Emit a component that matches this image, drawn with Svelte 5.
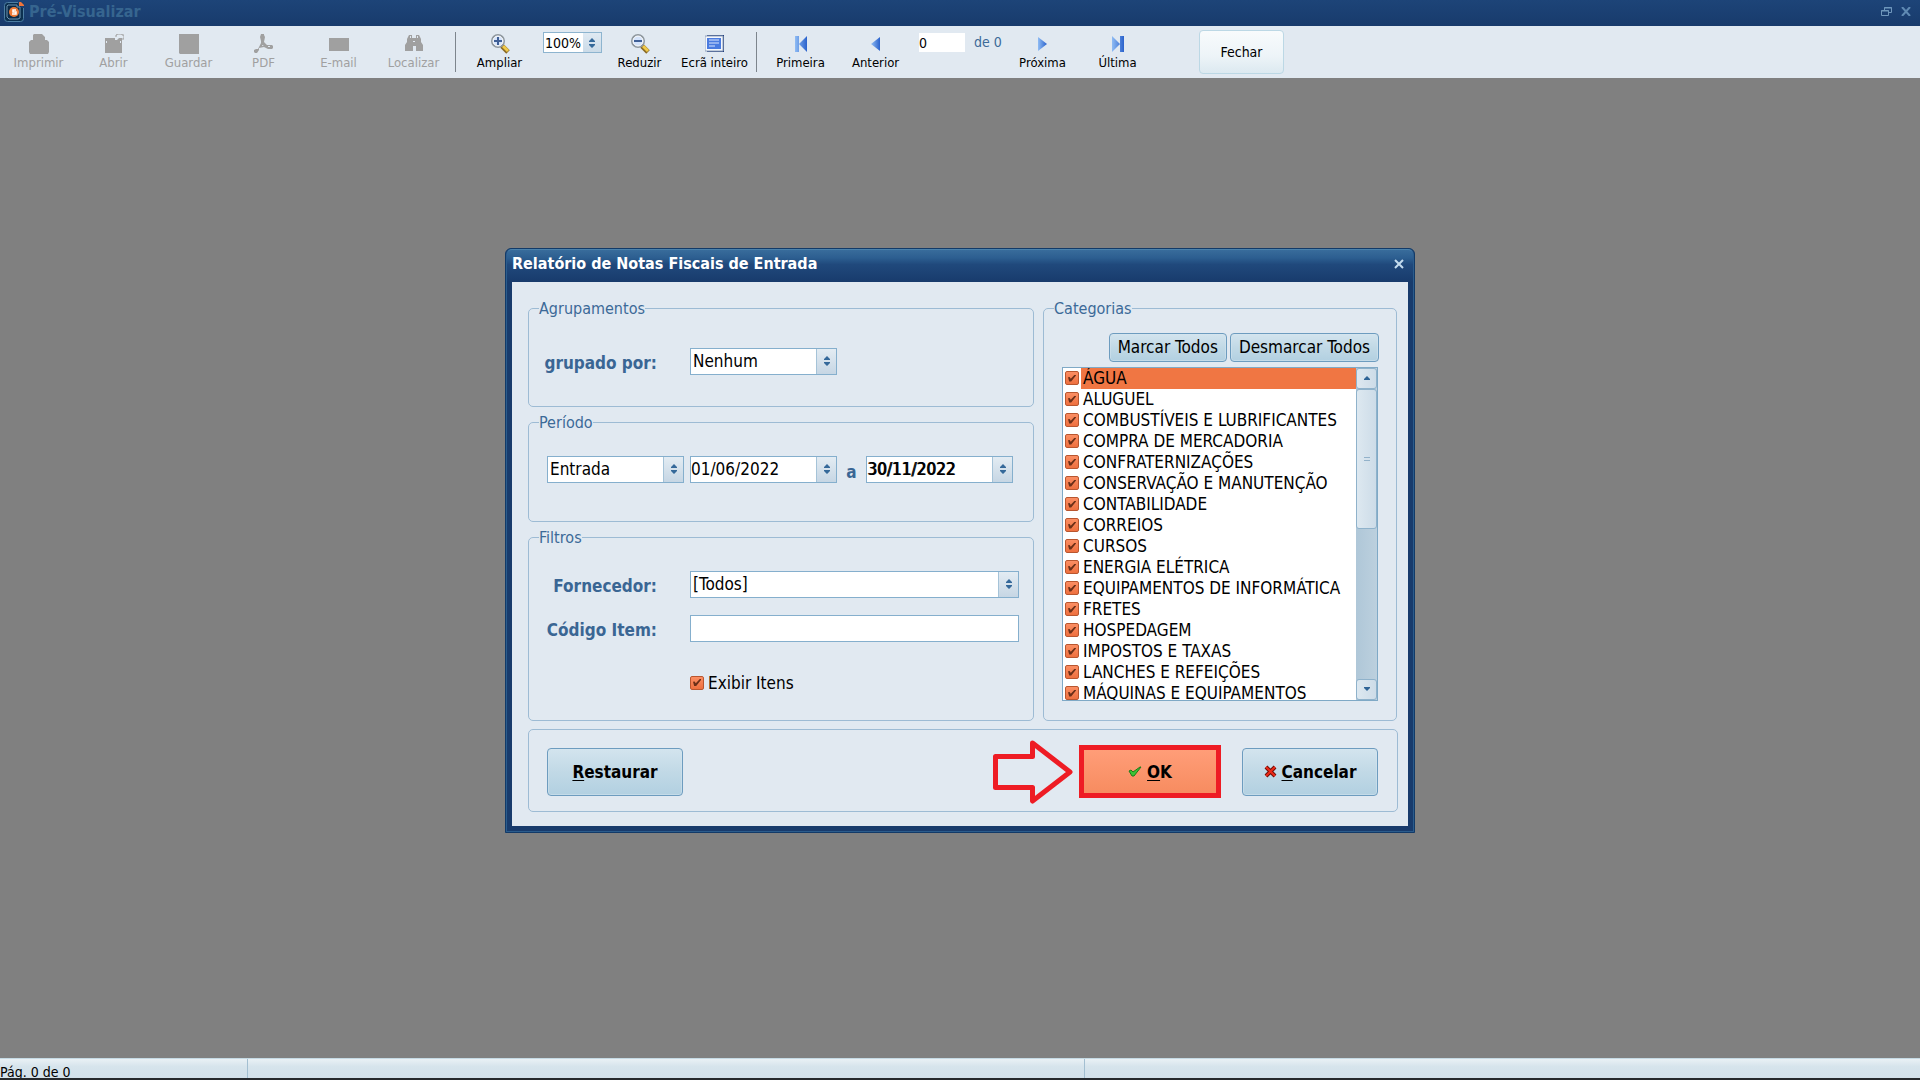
<script>
  let groupBy = $state('Nenhum');
  let dateKind = $state('Entrada');
  let dateFrom = $state('01/06/2022');
  let dateTo = $state('30/11/2022');
  let supplier = $state('[Todos]');
  let itemCode = $state('');
  let showItems = $state(true);
  let selected = $state(0);
  let zoom = $state('100%');
  let page = $state('0');

  const names = [
    'ÁGUA',
    'ALUGUEL',
    'COMBUSTÍVEIS E LUBRIFICANTES',
    'COMPRA DE MERCADORIA',
    'CONFRATERNIZAÇÕES',
    'CONSERVAÇÃO E MANUTENÇÃO',
    'CONTABILIDADE',
    'CORREIOS',
    'CURSOS',
    'ENERGIA ELÉTRICA',
    'EQUIPAMENTOS DE INFORMÁTICA',
    'FRETES',
    'HOSPEDAGEM',
    'IMPOSTOS E TAXAS',
    'LANCHES E REFEIÇÕES',
    'MÁQUINAS E EQUIPAMENTOS'
  ];

  let categories = $state(names.map((name) => ({ name, checked: true })));

  function markAll(value) {
    for (const c of categories) c.checked = value;
  }

  const fileTools = ['Imprimir', 'Abrir', 'Guardar', 'PDF', 'E-mail', 'Localizar'];
</script>

{#snippet arrows()}
  <svg width="6" height="10" viewBox="0 0 6 10" fill="#35699a">
    <path d="M3 0 6 3V4H0V3zM3 10 6 7V6H0V7z" />
  </svg>
{/snippet}

{#snippet fileIcon(name)}
  <svg width="20" height="20" viewBox="0 0 20 20" fill="#a0a0a0">
    {#if name === 'Imprimir'}
      <path d="M5 0h8l3 3v3h2l2 2v10l-1 2H1l-1-2V8l2-2h2V1z" />
    {:else if name === 'Abrir'}
      <path d="M1 4h10v2h2l2-2h3v15H1z" />
      <path d="M12 3V1h1V0h5v1h3M20 1v4h-4" fill="none" stroke="#a0a0a0" />
      <path d="M2 7h1v2H2zM16 7h1v2h-1z" fill="#e1e9f1" />
    {:else if name === 'Guardar'}
      <path d="M0 0h20v20H1l-1-1z" />
    {:else if name === 'PDF'}
      <path d="M7 0h3v1l1 2-1 5 3 3h5l1 1v2l-1 1h-4l-4-2-5 1v2l-2 3H1l-1-1v-2l2-1h2l3-6V7L6 3z" />
      <path d="M8 11h2l-2 1zM14 12h2v1h-2z" fill="#e1e9f1" />
    {:else if name === 'E-mail'}
      <path d="M0 4h20v13H0z" />
    {:else}
      <path d="M5 1h3v3h4V1h3l2 4v3l2 3v6h-7v-5H9v5H1v-6l2-3V5z" />
      <path d="M6 2h1v2H6zM13 2h1v2h-1zM9 7h2v1H9z" fill="#e1e9f1" />
    {/if}
  </svg>
{/snippet}

{#snippet lens(plus)}
  <svg width="20" height="20" viewBox="0 0 20 20">
    <path d="M12 12l6 6" stroke="#8a6a24" stroke-width="5" />
    <path d="M13 12l5 5" stroke="#f0c94a" stroke-width="3" />
    <circle cx="8" cy="7" r="6" fill="#d4e3fa" stroke="#8f989f" stroke-width="2" />
    <circle cx="8" cy="7" r="5" fill="none" stroke="#fff" stroke-width="1" />
    <path d={plus ? 'M4 7h8M8 3v8' : 'M4 7h8'} stroke="#3f5f96" stroke-width="2" />
  </svg>
{/snippet}

{#snippet navIcon(kind)}
  <svg width="12" height="16" viewBox="0 0 12 16">
    <defs>
      <linearGradient id="nav-{kind}" x1="0" x2="1">
        <stop offset="0" stop-color="#8fbcf4" />
        <stop offset="1" stop-color="#2a62cc" />
      </linearGradient>
    </defs>
    <g fill="url(#nav-{kind})">
      {#if kind === 'first'}
        <path d="M0 0h4v16H0zM12 0v16L4 8z" />
      {:else if kind === 'prev'}
        <path d="M10 1v14L1 8z" />
      {:else if kind === 'next'}
        <path d="M1 1v14l9-7z" />
      {:else}
        <path d="M0 0v16l8-8zM8 0h4v16H8z" />
      {/if}
    </g>
  </svg>
{/snippet}

<div class="app">
  <header class="titlebar">
    <svg width="20" height="20" viewBox="0 0 20 20">
      <rect x="0.5" y="0.5" width="19" height="19" rx="3" fill="#0c3050" stroke="#4d7ea3" />
      <path d="M4 3h9v2h3v11l-2 1H5l-2-2V4z" fill="#0b2a48" stroke="#6d93b0" />
      <path d="M14 0h6v6h-2l-4-4z" fill="#1c4070" />
      <path d="M15 0h2l3 3v1h-5z" fill="#f0743a" />
      <circle cx="10" cy="10" r="5" fill="#f07a35" />
      <path d="M12 8H9v2h3v2H8" fill="none" stroke="#fff" stroke-width="1.5" />
    </svg>
    <h1>Pré-Visualizar</h1>
    <button class="win" aria-label="Restaurar janela">
      <svg width="11" height="9" viewBox="0 0 11 9" fill="none" stroke="#6f97bc">
        <path d="M3.500 3V.5h7v5H8" />
        <path d="M3 1h8" />
        <path d="M.5 3.500h7v5h-7z" />
        <path d="M0 4h8" />
      </svg>
    </button>
    <button class="win" aria-label="Fechar janela">
      <svg width="10" height="9" viewBox="0 0 10 9" stroke="#5f8ab3" stroke-width="2">
        <path d="M1 0l8 9M9 0L1 9" />
      </svg>
    </button>
  </header>

  <div class="toolbar">
    {#each fileTools as name}
      <button class="tool" disabled>{@render fileIcon(name)}<span>{name}</span></button>
    {/each}
    <i class="sep"></i>
    <button class="tool">{@render lens(true)}<span>Ampliar</span></button>
    <div class="zoom">
      <input aria-label="Zoom" bind:value={zoom} />
      <button aria-label="Alterar zoom">{@render arrows()}</button>
    </div>
    <button class="tool">{@render lens(false)}<span>Reduzir</span></button>
    <button class="tool">
      <svg width="20" height="20" viewBox="0 0 20 20">
        <path d="M2 1h17v17H2z" fill="#24407c" />
        <path d="M0 2h18v15H0z" fill="#f4f7fc" stroke="#8fa0bb" />
        <path d="M2 4h14v11H2z" fill="#4a7be0" />
        <path d="M4 6h10M4 9h10M4 12h6" stroke="#d9e6ff" />
      </svg>
      <span>Ecrã inteiro</span>
    </button>
    <i class="sep"></i>
    <button class="tool">{@render navIcon('first')}<span>Primeira</span></button>
    <button class="tool">{@render navIcon('prev')}<span>Anterior</span></button>
    <label class="page"><input aria-label="Página" bind:value={page} />de 0</label>
    <button class="tool">{@render navIcon('next')}<span>Próxima</span></button>
    <button class="tool">{@render navIcon('last')}<span>Última</span></button>
    <button class="close">Fechar</button>
  </div>

  <main></main>

  <footer class="status">
    <span class="first">Pág. 0 de 0</span>
    <span class="second"></span>
    <span class="third"></span>
  </footer>

  <div class="overlay">
    <div class="dialog" role="dialog" aria-labelledby="dialog-title">
      <div class="caption">
        <h2 id="dialog-title">Relatório de Notas Fiscais de Entrada</h2>
        <button class="win" aria-label="Fechar">
          <svg width="10" height="10" viewBox="0 0 10 10" stroke="#c3dbee" stroke-width="2">
            <path d="M1 1l8 8M9 1L1 9" />
          </svg>
        </button>
      </div>

      <div class="content">
        <div class="columns">
          <div class="left">
            <fieldset class="grouping">
              <legend>Agrupamentos</legend>
              <div class="row">
                <label class="name" for="group">grupado por:</label>
                <div class="field">
                  <select id="group" bind:value={groupBy}><option>Nenhum</option></select>
                  <span class="spin">{@render arrows()}</span>
                </div>
              </div>
            </fieldset>

            <fieldset class="period">
              <legend>Período</legend>
              <div class="row dates">
                <div class="field kind">
                  <select aria-label="Tipo de data" bind:value={dateKind}><option>Entrada</option></select>
                  <span class="spin">{@render arrows()}</span>
                </div>
                <div class="field date">
                  <input aria-label="Data inicial" bind:value={dateFrom} />
                  <span class="spin">{@render arrows()}</span>
                </div>
                <span class="to">a</span>
                <div class="field date strong">
                  <input aria-label="Data final" bind:value={dateTo} />
                  <span class="spin">{@render arrows()}</span>
                </div>
              </div>
            </fieldset>

            <fieldset class="filters">
              <legend>Filtros</legend>
              <div class="row">
                <label class="name" for="supplier">Fornecedor:</label>
                <div class="field wide">
                  <select id="supplier" bind:value={supplier}><option>[Todos]</option></select>
                  <span class="spin">{@render arrows()}</span>
                </div>
              </div>
              <div class="row">
                <label class="name" for="code">Código Item:</label>
                <div class="field wide"><input id="code" bind:value={itemCode} /></div>
              </div>
              <label class="show">
                <input type="checkbox" bind:checked={showItems} />Exibir Itens
              </label>
            </fieldset>
          </div>

          <fieldset class="categories">
            <legend>Categorias</legend>
            <div class="marks">
              <button class="btn" onclick={() => markAll(true)}>Marcar Todos</button>
              <button class="btn" onclick={() => markAll(false)}>Desmarcar Todos</button>
            </div>
            <div class="listbox">
              <ul>
                {#each categories as c, i}
                  <li>
                    <input type="checkbox" id="cat-{i}" bind:checked={c.checked} onfocus={() => (selected = i)} />
                    <label for="cat-{i}" class:selected={i === selected}>{c.name}</label>
                  </li>
                {/each}
              </ul>
              <div class="scroll">
                <button aria-label="Subir">
                  <svg width="6" height="4" viewBox="0 0 6 4" fill="#2f6496"><path d="M3 0 6 3v1H0V3z" /></svg>
                </button>
                <div class="thumb"><i></i></div>
                <button aria-label="Descer">
                  <svg width="6" height="4" viewBox="0 0 6 4" fill="#2f6496"><path d="M3 4 6 1V0H0v1z" /></svg>
                </button>
              </div>
            </div>
          </fieldset>
        </div>

        <div class="actions">
          <button class="btn big"><span><u>R</u>estaurar</span></button>
          <svg class="pointer" width="80" height="66" viewBox="0 0 80 66">
            <path
              d="M2.500 17.500h37V4L77 33 39.500 62V48.500h-37z"
              fill="none"
              stroke="#ee1c24"
              stroke-width="5"
              stroke-linejoin="round"
            />
          </svg>
          <button class="ok">
            <svg width="14" height="11" viewBox="0 0 14 11">
              <path d="M1 5l2-1 2 2 7-5 1 0-7 9H4z" fill="#3cc435" stroke="#1d7a1a" />
            </svg>
            <span><u>O</u>K</span>
          </button>
          <button class="btn big cancel">
            <svg width="13" height="13" viewBox="0 0 13 13">
              <path d="M2 2l9 9M11 2l-9 9" stroke="#6d0f08" stroke-width="4" />
              <path d="M2 2l9 9M11 2l-9 9" stroke="#ee2a17" stroke-width="2" />
            </svg>
            <span><u>C</u>ancelar</span>
          </button>
        </div>
      </div>
    </div>
  </div>
</div>

<style>
  :global(body) {
    margin: 0;
    background: #808080;
  }

  .app {
    display: flex;
    flex-direction: column;
    min-height: 100vh;
    font: 17px/20px 'Tahoma', 'DejaVu Sans Condensed', 'Noto Sans', sans-serif;
    color: #000;
  }

  .app * {
    box-sizing: border-box;
  }

  button,
  input,
  select {
    font: inherit;
    color: inherit;
    margin: 0;
    padding: 0;
    border: 0;
    background: none;
    outline: none;
  }

  h1,
  h2 {
    flex: 1;
    margin: 0;
    font: bold 16px/20px 'Tahoma', 'DejaVu Sans Condensed', sans-serif;
  }

  svg {
    display: block;
    flex-shrink: 0;
  }

  .titlebar {
    display: flex;
    align-items: center;
    gap: 9px;
    height: 26px;
    padding: 0 9px 3px 4px;
    background: linear-gradient(#1d4478, #183b6c);
  }

  h1 {
    margin-left: -4px;
    color: #36658f;
  }

  .win {
    display: flex;
  }

  .toolbar {
    display: flex;
    height: 52px;
    padding-left: 1px;
    background: #e1e9f1;
    font-size: 13px;
    line-height: 16px;
  }

  .tool {
    display: flex;
    flex-direction: column;
    align-items: center;
    justify-content: space-between;
    width: 75px;
    padding: 7px 0;
    white-space: nowrap;
  }

  .tool:disabled {
    color: #a0a0a0;
  }

  .tool svg {
    margin: auto;
  }

  .sep {
    width: 1px;
    margin: 6px 6px 6px 4px;
    background: #7d858d;
  }

  .zoom {
    display: flex;
    width: 59px;
    height: 21px;
    margin: 6px 0 0 6px;
    border: 1px solid #8db4cf;
    background: #fff;
    font-size: 14px;
  }

  .zoom input {
    flex: 1;
    min-width: 0;
    padding-left: 1px;
  }

  .zoom button {
    display: grid;
    place-items: center;
    width: 18px;
    background: linear-gradient(#dfe9f2, #cbdbe8);
  }

  .page {
    display: flex;
    gap: 9px;
    width: 92px;
    padding: 7px 0 0 6px;
    font-size: 14px;
    line-height: 18px;
    color: #3c6a98;
  }

  .page input {
    width: 46px;
    height: 19px;
    background: #fff;
    color: #000;
  }

  .close {
    width: 85px;
    height: 44px;
    margin: 4px 0 0 44px;
    border: 1px solid #bcd8e5;
    border-radius: 4px;
    background: linear-gradient(#f8fbfc, #edf4f8 60%, #dce9f0);
    font-size: 14px;
  }

  main {
    flex: 1;
    background: #808080;
  }

  .status {
    display: flex;
    height: 22px;
    border-top: 1px solid #c5dae4;
    border-bottom: 2px solid #26292c;
    background: linear-gradient(#e9f1f5, #d6e4ec 40%, #d3e1ea);
    overflow: hidden;
    font-size: 14px;
    line-height: 26px;
  }

  .status span {
    border-right: 1px solid #a3bfd1;
  }

  .status .first {
    flex: 247;
  }

  .status .second {
    flex: 837;
  }

  .status .third {
    flex: 836;
    border: 0;
  }

  .overlay {
    position: fixed;
    inset: 0;
    display: grid;
    place-items: center;
  }

  .dialog {
    width: 910px;
    max-width: 100%;
    padding: 0 6px 6px;
    border: 1px solid #123a68;
    border-radius: 6px 6px 0 0;
    background: #183b6c;
    box-shadow: inset 0 0 0 1px #2b5c8c;
  }

  .caption {
    display: flex;
    align-items: center;
    height: 33px;
    margin: 0 -5px;
    padding: 0 9px 3px 5px;
    border-top: 1px solid #4a81ab;
    border-radius: 5px 5px 0 0;
    background: linear-gradient(#386c9b, #2c5e90 25%, #20497c 45%, #183b6c);
    color: #fff;
  }

  .content {
    padding: 17px 10px 14px 16px;
    background: #e1e9f1;
  }

  .columns {
    display: flex;
    gap: 9px;
    margin-bottom: 8px;
    padding-right: 1px;
  }

  .left {
    display: flex;
    flex-direction: column;
    gap: 6px;
    width: 506px;
  }

  fieldset {
    min-width: 0;
    margin: 0;
    padding: 0 10px;
    border: 1px solid #9dbbd4;
    border-radius: 5px;
  }

  legend {
    padding: 0;
    font-size: 16px;
    color: #3c6a98;
  }

  .grouping .row {
    padding-top: 29px;
    margin-bottom: 31px;
  }

  .period .row {
    padding-top: 23px;
    margin-bottom: 38px;
  }

  .filters {
    padding-bottom: 27px;
  }

  .filters .row {
    margin-bottom: 17px;
  }

  .filters legend {
    margin-bottom: 23px;
  }

  .row {
    display: flex;
    gap: 33px;
    padding-left: 8px;
  }

  .dates {
    gap: 6px;
  }

  .name {
    display: flex;
    justify-content: flex-end;
    width: 110px;
    padding-top: 5px;
    white-space: nowrap;
    font-weight: bold;
    color: #3a6694;
  }

  .field {
    display: flex;
    flex-shrink: 0;
    width: 147px;
    height: 27px;
    border: 1px solid #85afcd;
    background: #fff;
  }

  .field.kind {
    width: 137px;
  }

  .field.wide {
    width: 329px;
  }

  .field select,
  .field input {
    flex: 1;
    min-width: 0;
    padding: 0 2px;
    appearance: none;
  }

  .field.date input {
    padding: 0;
  }

  .strong input {
    text-shadow: 1px 0 #000;
  }

  .spin {
    display: grid;
    place-items: center;
    width: 20px;
    border-left: 1px solid #a5c3d8;
    background: linear-gradient(#e3ecf3, #c6d6e4);
  }

  .to {
    width: 17px;
    padding-top: 6px;
    text-align: center;
    font-weight: bold;
    color: #3a6694;
  }

  .show {
    display: flex;
    align-items: center;
    gap: 4px;
    margin: 31px 0 0 151px;
  }

  input[type='checkbox'] {
    display: grid;
    place-items: center;
    flex-shrink: 0;
    width: 14px;
    height: 14px;
    appearance: none;
    border: 1px solid #b9562f;
    border-radius: 2px;
    background: linear-gradient(#fb8e63, #ee703f);
  }

  input[type='checkbox']:checked::before {
    content: '';
    width: 8px;
    height: 7px;
    background: #6b2f18;
    clip-path: polygon(0 40%, 20% 35%, 35% 60%, 85% 0, 100% 0, 100% 15%, 40% 100%, 15% 100%);
  }

  .categories {
    flex: 1;
    padding: 0 18px 19px;
  }

  .categories legend {
    margin-left: -8px;
  }

  .marks {
    display: flex;
    justify-content: flex-end;
    gap: 3px;
    padding-top: 14px;
    margin: 0 -1px 5px 0;
  }

  .btn {
    height: 29px;
    padding: 0 8px;
    border: 1px solid #6d9cbf;
    border-radius: 4px;
    background: linear-gradient(#d3e4ee, #c1d9e6 50%, #b2d0e1);
    box-shadow: inset 0 0 0 1px #d6e6ef80;
    white-space: nowrap;
  }

  .listbox {
    display: flex;
    height: 334px;
    border: 1px solid #7fa9c6;
    background: #fff;
  }

  ul {
    flex: 1;
    min-width: 0;
    margin: 0;
    padding: 0;
    list-style: none;
    overflow: hidden;
  }

  li {
    display: flex;
    align-items: center;
    gap: 2px;
    height: 21px;
    padding-left: 2px;
  }

  li label {
    flex: 1;
    padding-left: 2px;
    line-height: 21px;
    white-space: nowrap;
  }

  .selected {
    background: #f07643;
  }

  .scroll {
    display: flex;
    flex-direction: column;
    width: 21px;
    background: linear-gradient(90deg, #afc7d8, #bcd0de);
  }

  .scroll button,
  .thumb {
    display: grid;
    place-items: center;
    height: 21px;
    border: 1px solid #8fb2cb;
    border-radius: 3px;
    background: linear-gradient(90deg, #dde8f0, #cddce8);
  }

  .scroll .thumb {
    height: 140px;
    margin-bottom: auto;
  }

  .thumb i {
    width: 6px;
    height: 4px;
    border: solid #93b2ca;
    border-width: 1px 0;
  }

  .actions {
    display: flex;
    align-items: center;
    padding: 9px 19px 6px 18px;
    border: 1px solid #9dbbd4;
    border-radius: 5px;
    font-weight: bold;
  }

  u {
    text-underline-offset: 2px;
  }

  .big {
    width: 136px;
    height: 48px;
    display: flex;
    align-items: center;
    justify-content: center;
    gap: 5px;
  }

  .pointer {
    margin-left: auto;
  }

  .ok {
    display: flex;
    align-items: center;
    justify-content: center;
    gap: 5px;
    width: 142px;
    height: 53px;
    margin: 0 21px 0 6px;
    border: 5px solid #ee1c24;
    background: linear-gradient(#ff9d78, #f78c60);
  }
</style>
